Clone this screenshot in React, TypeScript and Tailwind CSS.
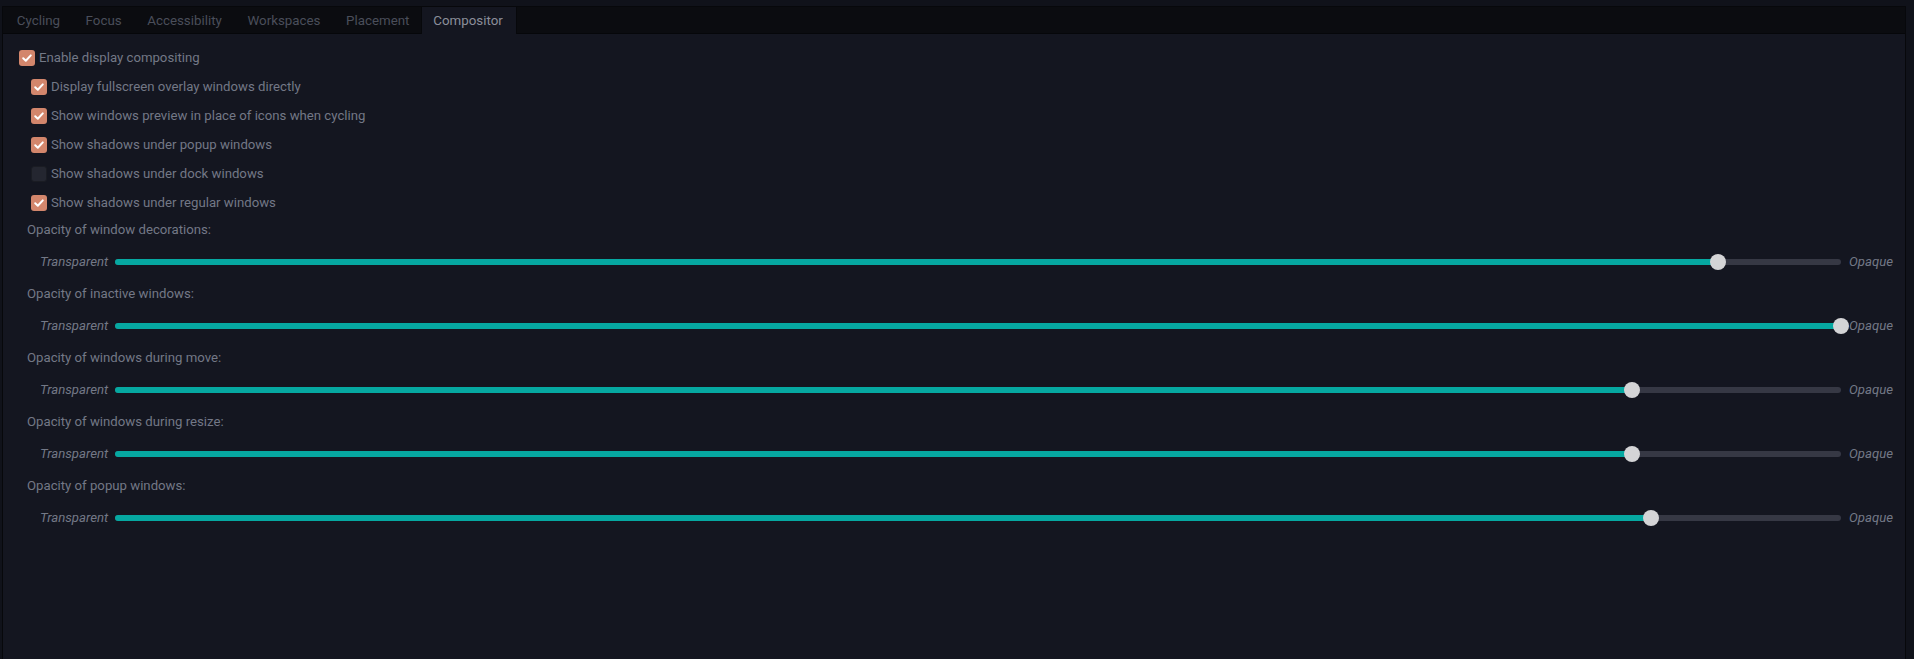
import React from "react";

const font = { fontFamily: "Roboto, 'Noto Sans', sans-serif" };

function Check({ checked }: { checked: boolean }) {
  if (!checked) {
    return <div className="w-[16px] h-[16px] rounded-[3px] bg-[#242630] border border-[#1a1c23] shrink-0" />;
  }
  return (
    <div className="w-[16px] h-[16px] rounded-[3px] bg-[#d3866c] flex items-center justify-center shrink-0">
      <svg width="12" height="12" viewBox="0 0 12 12">
        <path d="M2.2 6.3 L4.8 8.8 L9.8 3.4" fill="none" stroke="#ffffff" strokeWidth="2" strokeLinecap="round" strokeLinejoin="round" />
      </svg>
    </div>
  );
}

function CheckRow({ label, checked, indent }: { label: string; checked: boolean; indent?: boolean }) {
  return (
    <div className={`h-[29px] flex items-center gap-[4px] ${indent ? "pl-[28px]" : "pl-[16px]"}`}>
      <Check checked={checked} />
      <span className="text-[13.2px] text-[#737886]">{label}</span>
    </div>
  );
}

function SliderGroup({ label, value }: { label: string; value: number }) {
  return (
    <div>
      <div className="h-[26px] flex items-center pl-[24px] text-[13.2px] text-[#737886]">{label}</div>
      <div className="h-[38px] flex items-center pl-[37px]">
        <span className="w-[75px] shrink-0 italic text-[13.2px] text-[#737886]">Transparent</span>
        <div className="relative w-[1726px] h-[6px] rounded-full bg-[#363844] shrink-0">
          <div className="absolute left-0 top-0 h-[6px] rounded-full bg-[#06a8a1]" style={{ width: `${value * 100}%` }} />
          <div
            className="absolute top-1/2 w-[16px] h-[16px] -mt-[8px] -ml-[8px] rounded-full bg-[#d4d4d6]"
            style={{ left: `${value * 100}%` }}
          />
        </div>
        <span className="ml-[8px] italic text-[13.2px] text-[#737886]">Opaque</span>
      </div>
    </div>
  );
}

export default function App() {
  const tabs = ["Cycling", "Focus", "Accessibility", "Workspaces", "Placement"];
  return (
    <div className="w-[1914px] h-[659px] overflow-hidden bg-[#10121a] pt-[6px] pl-[2px]" style={font}>
      <div className="w-[1904px] h-[670px] border border-[#07080b] bg-[#141620] flex flex-col">
        <div className="h-[27px] bg-[#0b0c10] border-b border-[#06070a] flex items-stretch pl-[1px] shrink-0">
          {tabs.map((t) => (
            <div key={t} className="px-[12.8px] pt-[1px] flex items-center text-[13.33px] text-[#4a4e5a]">
              {t}
            </div>
          ))}
          <div className="ml-[-1px] w-[96px] -mb-[1px] pt-[1px] bg-[#141620] border-x border-[#07080b] flex items-center pl-[11px] text-[13.33px] text-[#8b8f9a]">
            Compositor
          </div>
        </div>
        <div className="pt-[9px]">
          <CheckRow label="Enable display compositing" checked />
          <CheckRow label="Display fullscreen overlay windows directly" checked indent />
          <CheckRow label="Show windows preview in place of icons when cycling" checked indent />
          <CheckRow label="Show shadows under popup windows" checked indent />
          <CheckRow label="Show shadows under dock windows" checked={false} indent />
          <CheckRow label="Show shadows under regular windows" checked indent />
          <SliderGroup label="Opacity of window decorations:" value={0.929} />
          <SliderGroup label="Opacity of inactive windows:" value={1} />
          <SliderGroup label="Opacity of windows during move:" value={0.879} />
          <SliderGroup label="Opacity of windows during resize:" value={0.879} />
          <SliderGroup label="Opacity of popup windows:" value={0.89} />
        </div>
      </div>
    </div>
  );
}
